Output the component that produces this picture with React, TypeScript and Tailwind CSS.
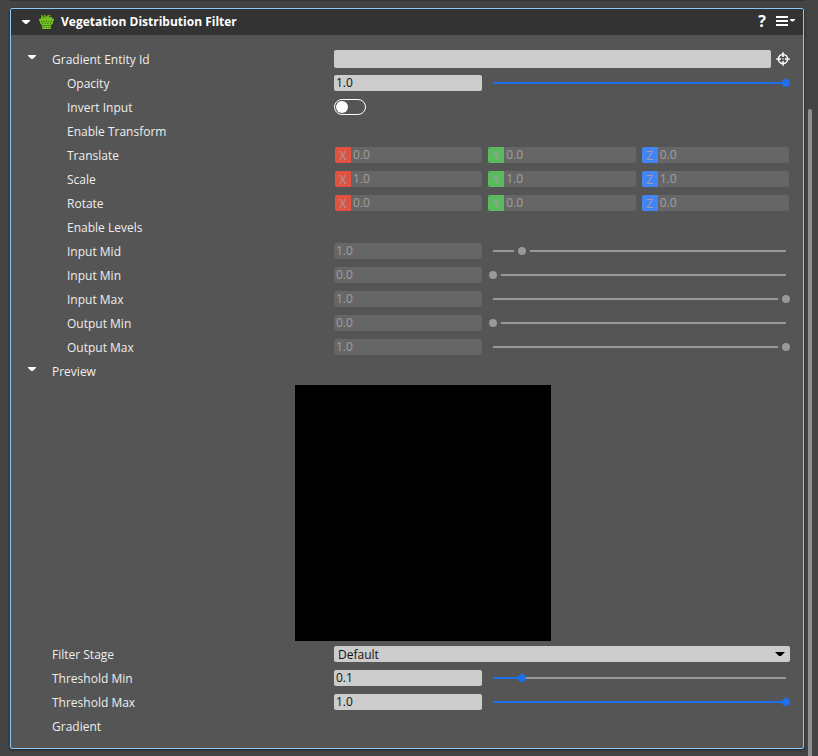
import React, { useState } from 'react';
import clsx from 'clsx';

const LEVELS = [
  { label: 'Input Mid', value: '1.0', percent: 10 },
  { label: 'Input Min', value: '0.0', percent: 0 },
  { label: 'Input Max', value: '1.0', percent: 100 },
  { label: 'Output Min', value: '0.0', percent: 0 },
  { label: 'Output Max', value: '1.0', percent: 100 }
];

const TRANSFORMS = [
  { label: 'Translate', value: '0.0' },
  { label: 'Scale', value: '1.0' },
  { label: 'Rotate', value: '0.0' }
];

const AXES = [
  { name: 'X', color: 'bg-[#e25243]' },
  { name: 'Y', color: 'bg-[#58bb5e]' },
  { name: 'Z', color: 'bg-[#4285f4]' }
];

const toId = (label: string) => label.toLowerCase().replace(/\s+/g, '-');

const Caret: React.FC = () => (
  <svg viewBox="0 0 8 4" className="block w-2 h-1" fill="#fff" aria-hidden="true">
    <path d="M0 0h8v1L4.6 4H3.4L0 1z" />
  </svg>
);

const BasketIcon: React.FC = () => (
  <svg viewBox="0 0 15 15" className="block w-[15px] h-[15px] shrink-0" aria-hidden="true">
    <path
      d="M1.5 5l1-2.500L2 1l2 .6L5 4l.4-1.500L5.200 0l1.300 1.200L7 3l1.200-1.600L10.500 1l1.500.4-1.500.8L9.500 3l2.500-.2 1.500 1.200-.5 1z"
      fill="#6fb51c"
    />
    <path d="M0 4.800h15v1.700h-.6L13.600 10h-.8l-.4 1.600h-.6V15H3.200v-3.400h-.6L2.200 10h-.8L.6 6.500H0z" fill="#78c420" />
    <path
      d="M1.800 6.700h1v1h-1zM4.200 6.700h1v1h-1zM6.900 6.700h1v1h-1zM9.600 6.700h1v1h-1zM12 6.700h1v1h-1zM3 8.800h1v1H3zM5.600 8.800h1v1h-1zM8.300 8.800h1v1h-1zM10.900 8.800h1v1h-1zM3 10.900h9v.7H3zM4.400 12.900h1v.8h-1zM6.900 12.900h1v.8h-1zM9.400 12.900h1v.8h-1z"
      fill="#2f4a17"
    />
  </svg>
);

const TargetIcon: React.FC = () => (
  <svg viewBox="0 0 14 14" className="block w-3.5 h-3.5" fill="none" stroke="#fff" aria-hidden="true">
    <circle cx="7" cy="7" r="4.600" strokeWidth="1.500" />
    <path d="M7 .3v4.700M7 9v4.700M.3 7H5M9 7h4.700" strokeWidth="1.500" />
    <circle cx="7" cy="7" r=".7" fill="#fff" stroke="none" />
  </svg>
);

interface RowProps {
  label: string;
  htmlFor?: string;
  nested?: boolean;
  onToggle?: () => void;
  children?: React.ReactNode;
}

const Row: React.FC<RowProps> = ({ label, htmlFor, nested, onToggle, children }) => (
  <div className="flex items-center h-6">
    <div className="flex items-center w-[323px] shrink-0 pl-[17px] pt-0.5">
      <div className={clsx('shrink-0', nested ? 'w-[39px]' : 'w-6')}>
        {onToggle && (
          <button type="button" onClick={onToggle} aria-label={`Toggle ${label}`} className="block pb-1.5">
            <Caret />
          </button>
        )}
      </div>
      {htmlFor ? <label htmlFor={htmlFor}>{label}</label> : <span>{label}</span>}
    </div>
    {children && <div className="flex items-center flex-1 min-w-0">{children}</div>}
  </div>
);

interface NumberSliderProps {
  label: string;
  value: string;
  percent: number;
  nested?: boolean;
  disabled?: boolean;
}

const NumberSlider: React.FC<NumberSliderProps> = ({ label, value, percent, nested, disabled }) => {
  const [text, setText] = useState(value);
  const [pos, setPos] = useState(percent);
  const id = toId(label);
  const fill = disabled ? '#999' : '#1e70eb';

  const handleSlide = (next: number) => {
    setPos(next);
    setText((next / 100).toFixed(1));
  };

  return (
    <Row label={label} htmlFor={id} nested={nested}>
      <input
        id={id}
        value={text}
        disabled={disabled}
        onChange={(e) => setText(e.target.value)}
        className="w-[148px] h-4 px-0.5 pb-px rounded-xs outline-none bg-[#ccc] text-[#111] disabled:bg-[#666] disabled:text-[#a0a0a0]"
      />
      <input
        type="range"
        aria-label={`${label} slider`}
        min={0}
        max={100}
        value={pos}
        disabled={disabled}
        onChange={(e) => handleSlide(Number(e.target.value))}
        style={{ backgroundImage: `linear-gradient(to right, ${fill} ${pos}%, #999 ${pos}%)` }}
        className="flex-1 min-w-0 h-4 ml-[7px] appearance-none outline-none bg-no-repeat bg-center bg-[length:calc(100%-8px)_2px] [&::-webkit-slider-thumb]:appearance-none [&::-webkit-slider-thumb]:w-2 [&::-webkit-slider-thumb]:h-2 [&::-webkit-slider-thumb]:rounded-full [&::-webkit-slider-thumb]:bg-[#1e70eb] disabled:[&::-webkit-slider-thumb]:bg-[#999] disabled:[&::-webkit-slider-thumb]:shadow-[0_0_0_4px_#555]"
      />
    </Row>
  );
};

const VectorRow: React.FC<{ label: string; value: string }> = ({ label, value }) => (
  <Row label={label} nested>
    <div className="grid grid-cols-3 gap-1.5 flex-1 px-px">
      {AXES.map((axis) => (
        <label key={axis.name} className="flex h-4 rounded-xs overflow-hidden text-[#a0a0a0]">
          <span className={clsx('w-4 shrink-0 text-center leading-[18px]', axis.color)}>{axis.name}</span>
          <input
            disabled
            defaultValue={value}
            aria-label={`${label} ${axis.name}`}
            className="flex-1 min-w-0 px-0.5 pb-px bg-[#666]"
          />
        </label>
      ))}
    </div>
  </Row>
);

const App: React.FC = () => {
  const [isOpen, setIsOpen] = useState(true);
  const [gradientOpen, setGradientOpen] = useState(true);
  const [previewOpen, setPreviewOpen] = useState(true);
  const [inverted, setInverted] = useState(false);

  return (
    <div className="flex min-h-screen bg-[#444] font-['Open_Sans',sans-serif] text-xs text-[#eee]">
      <main className="flex-1 min-w-0 pl-2.5 pb-[7px]">
        <div className="h-px mb-[7px] bg-[#333]" />
        <section className="border border-[#8ac8f8] rounded-xs bg-[#555] shadow-[0_1px_3px_#222]">
          {/* Header */}
          <header className="flex items-center h-[26px] pl-[11px] pr-[7px] bg-[#333]">
            <button type="button" onClick={() => setIsOpen(!isOpen)} aria-label="Toggle component" className="mr-[9px]">
              <Caret />
            </button>
            <div className="pb-0.5">
              <BasketIcon />
            </div>
            <h1 className="ml-[7px] font-bold text-white">Vegetation Distribution Filter</h1>
            <button type="button" aria-label="Help" className="ml-auto mr-2.5 pb-0.5 text-base leading-none font-bold text-white">?</button>
            <button type="button" aria-label="Menu" className="pb-0.5">
              <svg viewBox="0 0 20 12" className="block w-5 h-3" fill="#fff" aria-hidden="true">
                <path d="M0 1h12v2H0zM0 5h12v2H0zM0 9h12v2H0zM14 4h5v1l-2 1.500h-1L14 5z" />
              </svg>
            </button>
          </header>

          {isOpen && (
            <div className="pt-3 pb-2.5 pr-[13px]">
              <Row label="Gradient Entity Id" htmlFor="gradient-entity-id" onToggle={() => setGradientOpen(!gradientOpen)}>
                <input id="gradient-entity-id" className="flex-1 min-w-0 h-[18px] px-1 rounded-xs outline-none bg-[#ccc] text-[#111]" />
                <button type="button" aria-label="Pick entity" className="ml-[5px]">
                  <TargetIcon />
                </button>
              </Row>

              {gradientOpen && (
                <>
                  <NumberSlider label="Opacity" value="1.0" percent={100} nested />
                  <Row label="Invert Input" htmlFor="invert-input" nested>
                    <input
                      id="invert-input"
                      type="checkbox"
                      role="switch"
                      checked={inverted}
                      onChange={(e) => setInverted(e.target.checked)}
                      className="flex items-center w-8 h-4 px-px appearance-none rounded-full border border-white before:block before:w-3 before:h-3 before:rounded-full before:bg-white checked:justify-end checked:bg-[#1e70eb]"
                    />
                  </Row>
                  <Row label="Enable Transform" nested />
                  {TRANSFORMS.map((t) => (
                    <VectorRow key={t.label} label={t.label} value={t.value} />
                  ))}
                  <Row label="Enable Levels" nested />
                  {LEVELS.map((level) => (
                    <NumberSlider key={level.label} {...level} nested disabled />
                  ))}
                </>
              )}

              <Row label="Preview" onToggle={() => setPreviewOpen(!previewOpen)} />
              {previewOpen && (
                <div className="flex justify-center pl-[45px] pt-0.5 pb-px">
                  <div className="w-64 h-64 bg-black" />
                </div>
              )}

              <Row label="Filter Stage" htmlFor="filter-stage">
                <div className="relative flex-1">
                  <select
                    id="filter-stage"
                    defaultValue="Default"
                    className="block w-full h-4 px-1 pt-px appearance-none rounded-xs outline-none bg-[#ccc] text-[#111] leading-4"
                  >
                    <option>Default</option>
                    <option>Preprocess</option>
                    <option>Postprocess</option>
                  </select>
                  <svg viewBox="0 0 10 4" className="absolute right-[5px] top-1.5 w-2.5 h-1 pointer-events-none" aria-hidden="true">
                    <path d="M0 0h10L6 4H4z" />
                  </svg>
                </div>
              </Row>
              <NumberSlider label="Threshold Min" value="0.1" percent={10} />
              <NumberSlider label="Threshold Max" value="1.0" percent={100} />
              <Row label="Gradient" />
            </div>
          )}
        </section>
      </main>

      {/* Scroll bar */}
      <div className="flex pl-1 pr-1.5 pt-[109px]">
        <div className="w-1 rounded-t-full bg-[#8e8e8e]" />
      </div>
    </div>
  );
};

export default App;
